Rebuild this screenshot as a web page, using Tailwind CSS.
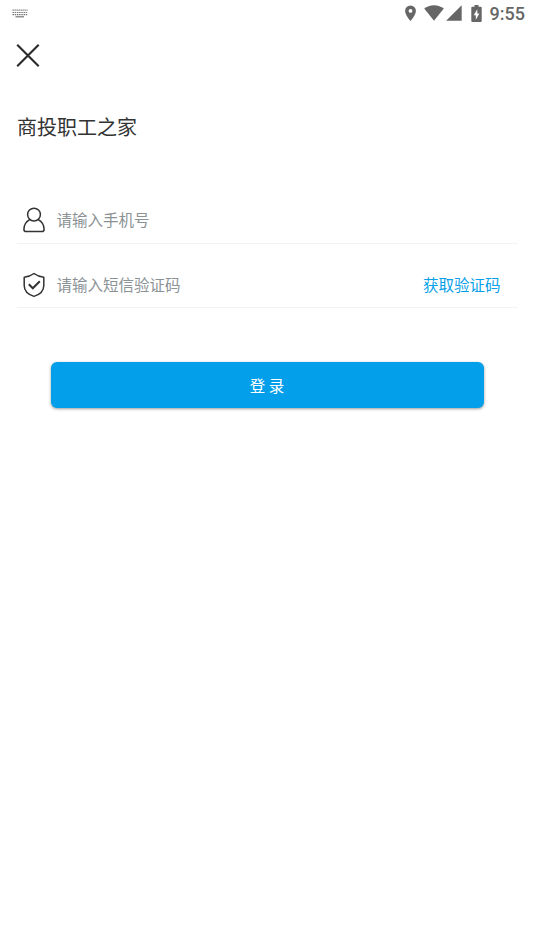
<!DOCTYPE html>
<html lang="zh-CN">
<head>
<meta charset="utf-8">
<title>商投职工之家</title>
<script src="https://cdn.jsdelivr.net/npm/@tailwindcss/browser@4"></script>
</head>
<body class="bg-white">
<main class="flex h-[950px] w-[534px] flex-col overflow-hidden bg-white font-['Noto_Sans_CJK_SC',sans-serif] text-[#333]">
  <header class="flex h-[26px] shrink-0 items-center pl-3 pr-[8.5px] text-[#666]">
    <svg class="mt-px h-[9px] w-4" viewBox="0 0 16 9" fill="none" stroke="#777">
      <path d="M.5 1.2h15" stroke-dasharray="1.3 .7" stroke-width="1.2"/>
      <path d="M.5 3.5h15M.5 5.7h15" stroke-dasharray="1.5 .7" stroke-width="1.2"/>
      <path d="M3.5 7.8h8.5" stroke-width="1.2"/>
    </svg>
    <svg class="ml-auto h-4 w-[11px]" viewBox="0 0 11 16" fill="currentColor"><path fill-rule="evenodd" d="M5.5 0.500A5.400 5.400 0 0 0 .1 5.900C.1 9.900 5.500 16 5.500 16s5.400-6.100 5.400-10.100A5.400 5.400 0 0 0 5.500.5Zm0 3.500a1.900 1.900 0 1 1 0 3.800 1.900 1.900 0 0 1 0-3.800Z"/></svg>
    <svg class="ml-2 h-4 w-5" viewBox="0 0 20 16" fill="currentColor"><path d="M10 .2C6.200.2 2.800 1.500.2 3.600L10 15.700l9.800-12.100C17.200 1.500 13.800.2 10 .2Z"/></svg>
    <svg class="ml-0.5 h-4 w-4" viewBox="0 0 16 16" fill="currentColor"><path d="M15.700.2v15.500H.1Z"/></svg>
    <svg class="ml-[9px] h-[17px] w-[11px]" viewBox="0 0 11 17" fill="currentColor"><path fill-rule="evenodd" d="M3.500 0h4v1.700h2.200q1 0 1 1v13.200q0 1-1 1H1.300q-1 0-1-1V2.700q0-1 1-1h2.200ZM6.300 4.300 2.700 10.300h2.100v4.400l3.600-6.300H6.300Z"/></svg>
    <span class="ml-[7.5px] mt-0.5 w-9 whitespace-nowrap font-['Roboto',sans-serif] text-[18px] font-medium leading-5">9:55</span>
  </header>
  <div class="flex h-[58px] shrink-0 items-center pl-4">
    <button aria-label="关闭" class="block"><svg class="h-6 w-6" viewBox="0 0 24 24" fill="none" stroke="#2b2b2b" stroke-width="2.1"><path d="m1.200 1.700 21.500 21.500M22.700 1.700 1.200 23.200"/></svg></button>
  </div>
  <h1 class="mt-7 pl-[17px] text-[20px] font-normal leading-[30px]">商投职工之家</h1>
  <form class="mt-[53px] px-[16.5px]">
    <div class="flex h-[49px] items-center border-b border-[#f3f3f3] pl-1.5 pt-0.5 text-[15.5px] text-[#8b9295]">
      <svg class="h-[26px] w-[22px]" viewBox="0 0 22 26" fill="none" stroke="#333" stroke-width="1.500"><circle cx="11" cy="7.600" r="6.400"/><path d="M6.700 12.600C3.200 14.500 1 18 .9 22.200c0 1.500.7 2.400 2.200 2.400h15.800c1.500 0 2.200-.9 2.200-2.400-.1-4.200-2.300-7.700-5.800-9.600"/></svg>
      <span class="ml-3">请输入手机号</span>
    </div>
    <div class="mt-[15px] flex h-[49px] items-center border-b border-[#f3f3f3] pl-1.5 pr-[17px] pt-[3px] text-[15.5px] text-[#8b9295]">
      <svg class="h-[26px] w-[22px]" viewBox="0 0 22 26" fill="none" stroke="#333" stroke-width="1.500"><path d="M11 1.500C8.200 3.600 5 4.900 1.200 5.300V13.500c0 5.200 3.900 9 9.800 10.900 5.900-1.900 9.800-5.700 9.800-10.900V5.300C17 4.900 13.800 3.600 11 1.500Z" stroke-linejoin="round"/><path d="m5.800 12.300 4 4 7-7" stroke-width="2"/></svg>
      <span class="ml-3">请输入短信验证码</span>
      <button type="button" class="ml-auto text-[#079fe9]">获取验证码</button>
    </div>
    <button type="button" class="mx-auto mt-[53.5px] block h-[46.5px] w-[433px] rounded-md bg-[#049fea] pt-px text-[15.5px] text-white shadow-[0_1px_3px_rgba(0,0,0,0.4)]">登 录</button>
  </form>
</main>
</body>
</html>
